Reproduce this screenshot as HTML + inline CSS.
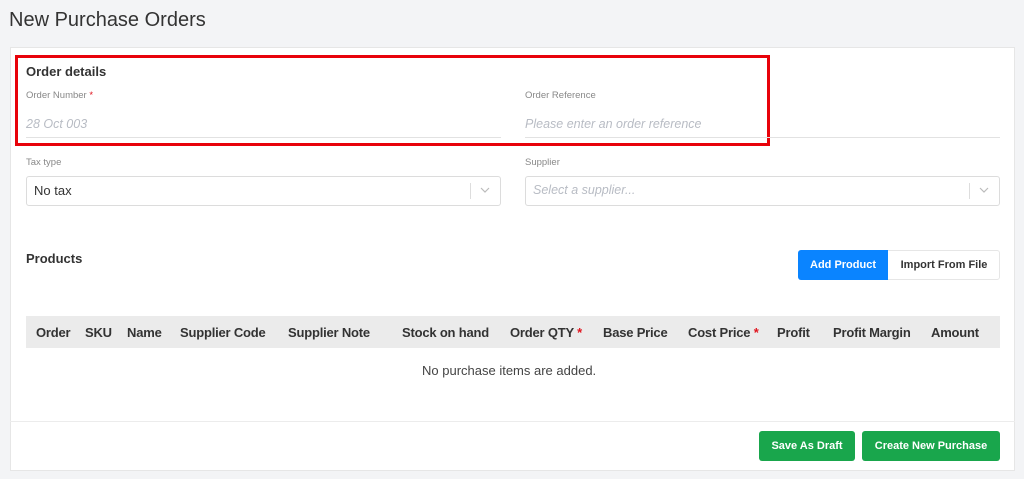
<!DOCTYPE html><html><head><style>
body{margin:0;width:1024px;height:479px;background:#f3f4f6;font-family:"Liberation Sans",sans-serif;position:relative;overflow:hidden}
.a{position:absolute;white-space:nowrap}
.lbl{font-size:9.5px;color:#888}
.ph{font-size:12.5px;color:#b8bcc4;font-style:italic}
.th{font-size:13px;font-weight:bold;color:#333;top:325px;letter-spacing:-0.2px}
.star{color:#e0141e}
</style></head><body>
<div class="a" style="left:9px;top:9px;font-size:20px;color:#333">New Purchase Orders</div>
<div class="a" style="left:10px;top:47px;width:1005px;height:424px;background:#fff;border:1px solid #e6e6e6;box-sizing:border-box"></div>
<div class="a" style="left:15px;top:55px;width:755px;height:91px;border:3px solid #e8020a;box-sizing:border-box"></div>
<div class="a" style="left:26px;top:64px;font-size:13px;font-weight:bold;color:#333">Order details</div>
<div class="a lbl" style="left:26px;top:90px">Order Number <span class="star">*</span></div>
<div class="a ph" style="left:26px;top:117px">28 Oct 003</div>
<div class="a" style="left:26px;top:137px;width:475px;height:1px;background:#e2e2e2"></div>
<div class="a lbl" style="left:525px;top:90px">Order Reference</div>
<div class="a ph" style="left:525px;top:117px">Please enter an order reference</div>
<div class="a" style="left:525px;top:137px;width:475px;height:1px;background:#e2e2e2"></div>
<div class="a lbl" style="left:26px;top:157px">Tax type</div>
<div class="a" style="left:26px;top:176px;width:475px;height:30px;border:1px solid #dcdcdc;border-radius:3px;box-sizing:border-box"></div>
<div class="a" style="left:34px;top:183px;font-size:13px;color:#333">No tax</div>
<div class="a" style="left:470px;top:183px;width:1px;height:16px;background:#ddd"></div>
<svg class="a" style="left:480px;top:187px" width="10" height="6"><path d="M1 1L5 5L9 1" fill="none" stroke="#bbb" stroke-width="1.2"/></svg>
<div class="a lbl" style="left:525px;top:157px">Supplier</div>
<div class="a" style="left:525px;top:176px;width:475px;height:30px;border:1px solid #dcdcdc;border-radius:3px;box-sizing:border-box"></div>
<div class="a ph" style="left:533px;top:183px">Select a supplier...</div>
<div class="a" style="left:969px;top:183px;width:1px;height:16px;background:#ddd"></div>
<svg class="a" style="left:979px;top:187px" width="10" height="6"><path d="M1 1L5 5L9 1" fill="none" stroke="#bbb" stroke-width="1.2"/></svg>
<div class="a" style="left:26px;top:251px;font-size:13px;font-weight:bold;color:#333">Products</div>
<div class="a" style="left:798px;top:250px;width:202px;height:30px;border:1px solid #e6e6e6;border-radius:3px;box-sizing:border-box"></div>
<div class="a" style="left:798px;top:250px;width:90px;height:30px;background:#0a84ff;border-radius:3px 0 0 3px;color:#fff;font-size:11px;font-weight:bold;line-height:30px;text-align:center">Add Product</div>
<div class="a" style="left:888px;top:250px;width:112px;height:30px;color:#333;font-size:11px;font-weight:bold;line-height:30px;text-align:center">Import From File</div>
<div class="a" style="left:26px;top:316px;width:974px;height:32px;background:#ebebeb"></div>
<div class="a th" style="left:36px">Order</div>
<div class="a th" style="left:85px">SKU</div>
<div class="a th" style="left:127px">Name</div>
<div class="a th" style="left:180px">Supplier Code</div>
<div class="a th" style="left:288px">Supplier Note</div>
<div class="a th" style="left:402px">Stock on hand</div>
<div class="a th" style="left:510px">Order QTY <span class="star">*</span></div>
<div class="a th" style="left:603px">Base Price</div>
<div class="a th" style="left:688px">Cost Price <span class="star">*</span></div>
<div class="a th" style="left:777px">Profit</div>
<div class="a th" style="left:833px">Profit Margin</div>
<div class="a th" style="left:931px">Amount</div>
<div class="a" style="left:422px;top:363px;font-size:13px;color:#444">No purchase items are added.</div>
<div class="a" style="left:10px;top:421px;width:1005px;height:1px;background:#ececec"></div>
<div class="a" style="left:759px;top:431px;width:96px;height:30px;background:#19a64c;border-radius:3px;color:#fff;font-size:11px;font-weight:bold;line-height:30px;text-align:center">Save As Draft</div>
<div class="a" style="left:862px;top:431px;width:138px;height:30px;background:#19a64c;border-radius:3px;color:#fff;font-size:11px;font-weight:bold;line-height:30px;text-align:center">Create New Purchase</div>
</body></html>
